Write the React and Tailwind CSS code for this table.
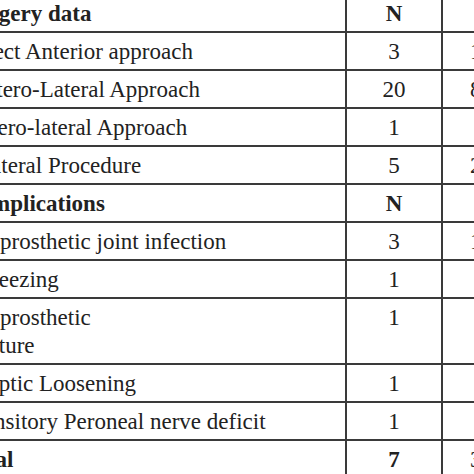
const rows = [
  { label: 'Surgery data', n: 'N', pct: '%', bold: true },
  { label: 'Direct Anterior approach', n: '3', pct: '13%' },
  { label: 'Postero-Lateral Approach', n: '20', pct: '83%' },
  { label: 'Antero-lateral Approach', n: '1', pct: '4%' },
  { label: 'Bilateral Procedure', n: '5', pct: '21%' },
  { label: 'Complications', n: 'N', pct: '%', bold: true },
  { label: 'Periprosthetic joint infection', n: '3', pct: '13%' },
  { label: 'Squeezing', n: '1', pct: '4%' },
  { label: ['Periprosthetic', 'fracture'], n: '1', pct: '4%' },
  { label: 'Aseptic Loosening', n: '1', pct: '4%' },
  { label: 'Transitory Peroneal nerve deficit', n: '1', pct: '4%' },
  { label: 'Total', n: '7', pct: '30%', bold: true },
]

export default function App() {
  return (
    <div className="w-[474px] h-[474px] overflow-hidden bg-white">
      <div className="ml-[-43px] mt-[-5px] w-[582px] font-['Liberation_Serif',serif] text-[23px] leading-[28px] text-[#222]">
        {rows.map((r, i) => (
          <div
            key={i}
            className={`flex border-b-2 border-[#3a3a3a] ${r.bold ? 'font-bold' : ''}`}
          >
            <div className="w-[390px] shrink-0 border-r-2 border-[#3a3a3a] pl-[6px] pt-[5px] pb-[3px]">
              {Array.isArray(r.label)
                ? r.label.map((l, j) => <div key={j}>{l}</div>)
                : r.label}
            </div>
            <div className="w-[96px] shrink-0 border-r-2 border-[#3a3a3a] pt-[5px] pb-[3px] text-center">
              {r.n}
            </div>
            <div className="w-[96px] shrink-0 pt-[5px] pb-[3px] text-center font-normal">
              {r.pct}
            </div>
          </div>
        ))}
      </div>
    </div>
  )
}
